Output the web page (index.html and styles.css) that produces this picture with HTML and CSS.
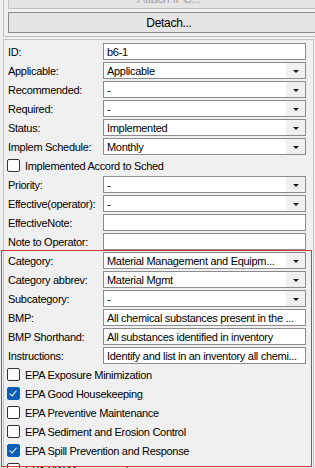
FILE: index.html
```html
<!DOCTYPE html>
<html lang="en">
<head>
  <meta charset="UTF-8">
  <meta name="viewport" content="width=device-width, initial-scale=1.0">
  <title>BMP Details</title>
  <link rel="stylesheet" href="styles.css">
</head>
<body>
  <div class="scroll-area">
    <!-- Attachment buttons -->
    <div class="attach-group">
      <button class="win-button" disabled>Attach IPC...</button>
      <button class="win-button">Detach...</button>
    </div>

    <!-- Detail fields -->
    <div class="detail-panel">
      <div class="field-grid">
        <label>ID:</label>
        <div class="textbox">b6-1</div>

        <label>Applicable:</label>
        <div class="combo"><span class="combo-text">Applicable</span><span class="combo-arrow"></span></div>

        <label>Recommended:</label>
        <div class="combo"><span class="combo-text">-</span><span class="combo-arrow"></span></div>

        <label>Required:</label>
        <div class="combo"><span class="combo-text">-</span><span class="combo-arrow"></span></div>

        <label>Status:</label>
        <div class="combo"><span class="combo-text">Implemented</span><span class="combo-arrow"></span></div>

        <label>Implem Schedule:</label>
        <div class="combo"><span class="combo-text">Monthly</span><span class="combo-arrow"></span></div>

        <div class="check-row wide"><span class="check"></span>Implemented Accord to Sched</div>

        <label>Priority:</label>
        <div class="combo"><span class="combo-text">-</span><span class="combo-arrow"></span></div>

        <label>Effective(operator):</label>
        <div class="combo"><span class="combo-text">-</span><span class="combo-arrow"></span></div>

        <label>EffectiveNote:</label>
        <div class="textbox"></div>

        <label>Note to Operator:</label>
        <div class="textbox"></div>

        <label>Category:</label>
        <div class="combo"><span class="combo-text">Material Management and Equipm...</span><span class="combo-arrow"></span></div>

        <label>Category abbrev:</label>
        <div class="combo"><span class="combo-text">Material Mgmt</span><span class="combo-arrow"></span></div>

        <label>Subcategory:</label>
        <div class="combo"><span class="combo-text">-</span><span class="combo-arrow"></span></div>

        <label>BMP:</label>
        <div class="textbox">All chemical substances present in the ...</div>

        <label>BMP Shorthand:</label>
        <div class="textbox">All substances identified in inventory</div>

        <label>Instructions:</label>
        <div class="textbox">Identify and list in an inventory all chemi...</div>

        <div class="check-row wide"><span class="check"></span>EPA Exposure Minimization</div>
        <div class="check-row wide"><span class="check checked"></span>EPA Good Housekeeping</div>
        <div class="check-row wide"><span class="check"></span>EPA Preventive Maintenance</div>
        <div class="check-row wide"><span class="check"></span>EPA Sediment and Erosion Control</div>
        <div class="check-row wide"><span class="check checked"></span>EPA Spill Prevention and Response</div>
        <div class="check-row wide"><span class="check"></span>EPA SW Management</div>
      </div>
    </div>
  </div>

  <!-- Red highlight drawn over the category section -->
  <div class="highlight"></div>
</body>
</html>
```

FILE: styles.css
```css
* {
  margin: 0;
  padding: 0;
  box-sizing: border-box;
}

body {
  width: 315px;
  height: 468px;
  overflow: hidden;
  position: relative;
  background-color: #f0f0f0;
  font-family: "Liberation Sans", Arial, sans-serif;
  font-size: 11px;
  letter-spacing: -0.3px;
  color: #000;
}

/* page is scrolled a little, so the first button is cut off */
.scroll-area {
  margin-top: -13px;
}

/* Attach / Detach group */
.attach-group {
  margin-left: 3px;
  margin-right: -20px;
  border: 1px solid #bdbdbd;
  padding: 0 4px 3px 4px;
  display: flex;
  flex-direction: column;
  gap: 3px;
}

.win-button {
  height: 21px;
  border: 1px solid #8a8a8a;
  background-color: #e5e5e5;
  font-family: inherit;
  font-size: 12px;
  letter-spacing: -0.3px;
  color: #000;
  text-align: center;
}

.win-button:disabled {
  color: #a3a3a3;
  border-color: #bfbfbf;
}

/* Detail panel */
.detail-panel {
  margin: 2px 0 0 3px;
  width: 311px;
  border: 1px solid #c4c4c4;
  padding: 3px 7px 0 4px;
}

.field-grid {
  display: grid;
  grid-template-columns: 95px 203px;
  grid-auto-rows: 17px;
  row-gap: 2px;
}

.field-grid label {
  display: flex;
  align-items: center;
  white-space: nowrap;
}

.textbox,
.combo {
  background-color: #fff;
  border: 1px solid #8c8c8c;
  display: flex;
  align-items: center;
  white-space: nowrap;
  overflow: hidden;
}

.textbox {
  padding-left: 3px;
}

.combo-text {
  flex-grow: 1;
  padding-left: 3px;
  overflow: hidden;
}

.combo-arrow {
  width: 19px;
  height: 100%;
  background-color: #f0f0f0;
  display: flex;
  align-items: center;
  justify-content: center;
}

.combo-arrow:after {
  content: "";
  border-left: 3px solid transparent;
  border-right: 3px solid transparent;
  border-top: 3px solid #1a1a1a;
  margin-top: 1px;
}

/* Check boxes */
.check-row {
  display: flex;
  align-items: center;
  white-space: nowrap;
  font-size: 11px;
}

.wide {
  grid-column: 1 / span 2;
}

.check {
  width: 13px;
  height: 13px;
  margin: 0 5px 0 -1px;
  border: 1px solid #333;
  border-radius: 2px;
  background-color: #fff;
  position: relative;
  flex-shrink: 0;
}

.check.checked {
  background-color: #0a5fb4;
  border-color: #0a5fb4;
}

.check.checked:after {
  content: "";
  position: absolute;
  left: 3px;
  top: 1px;
  width: 3px;
  height: 6px;
  border-right: 1.5px solid #fff;
  border-bottom: 1.5px solid #fff;
  transform: rotate(40deg);
}

/* red annotation box */
.highlight {
  position: absolute;
  left: 1px;
  top: 250px;
  width: 311px;
  height: 217px;
  border: 1px solid #cf3a3a;
  pointer-events: none;
}
```
